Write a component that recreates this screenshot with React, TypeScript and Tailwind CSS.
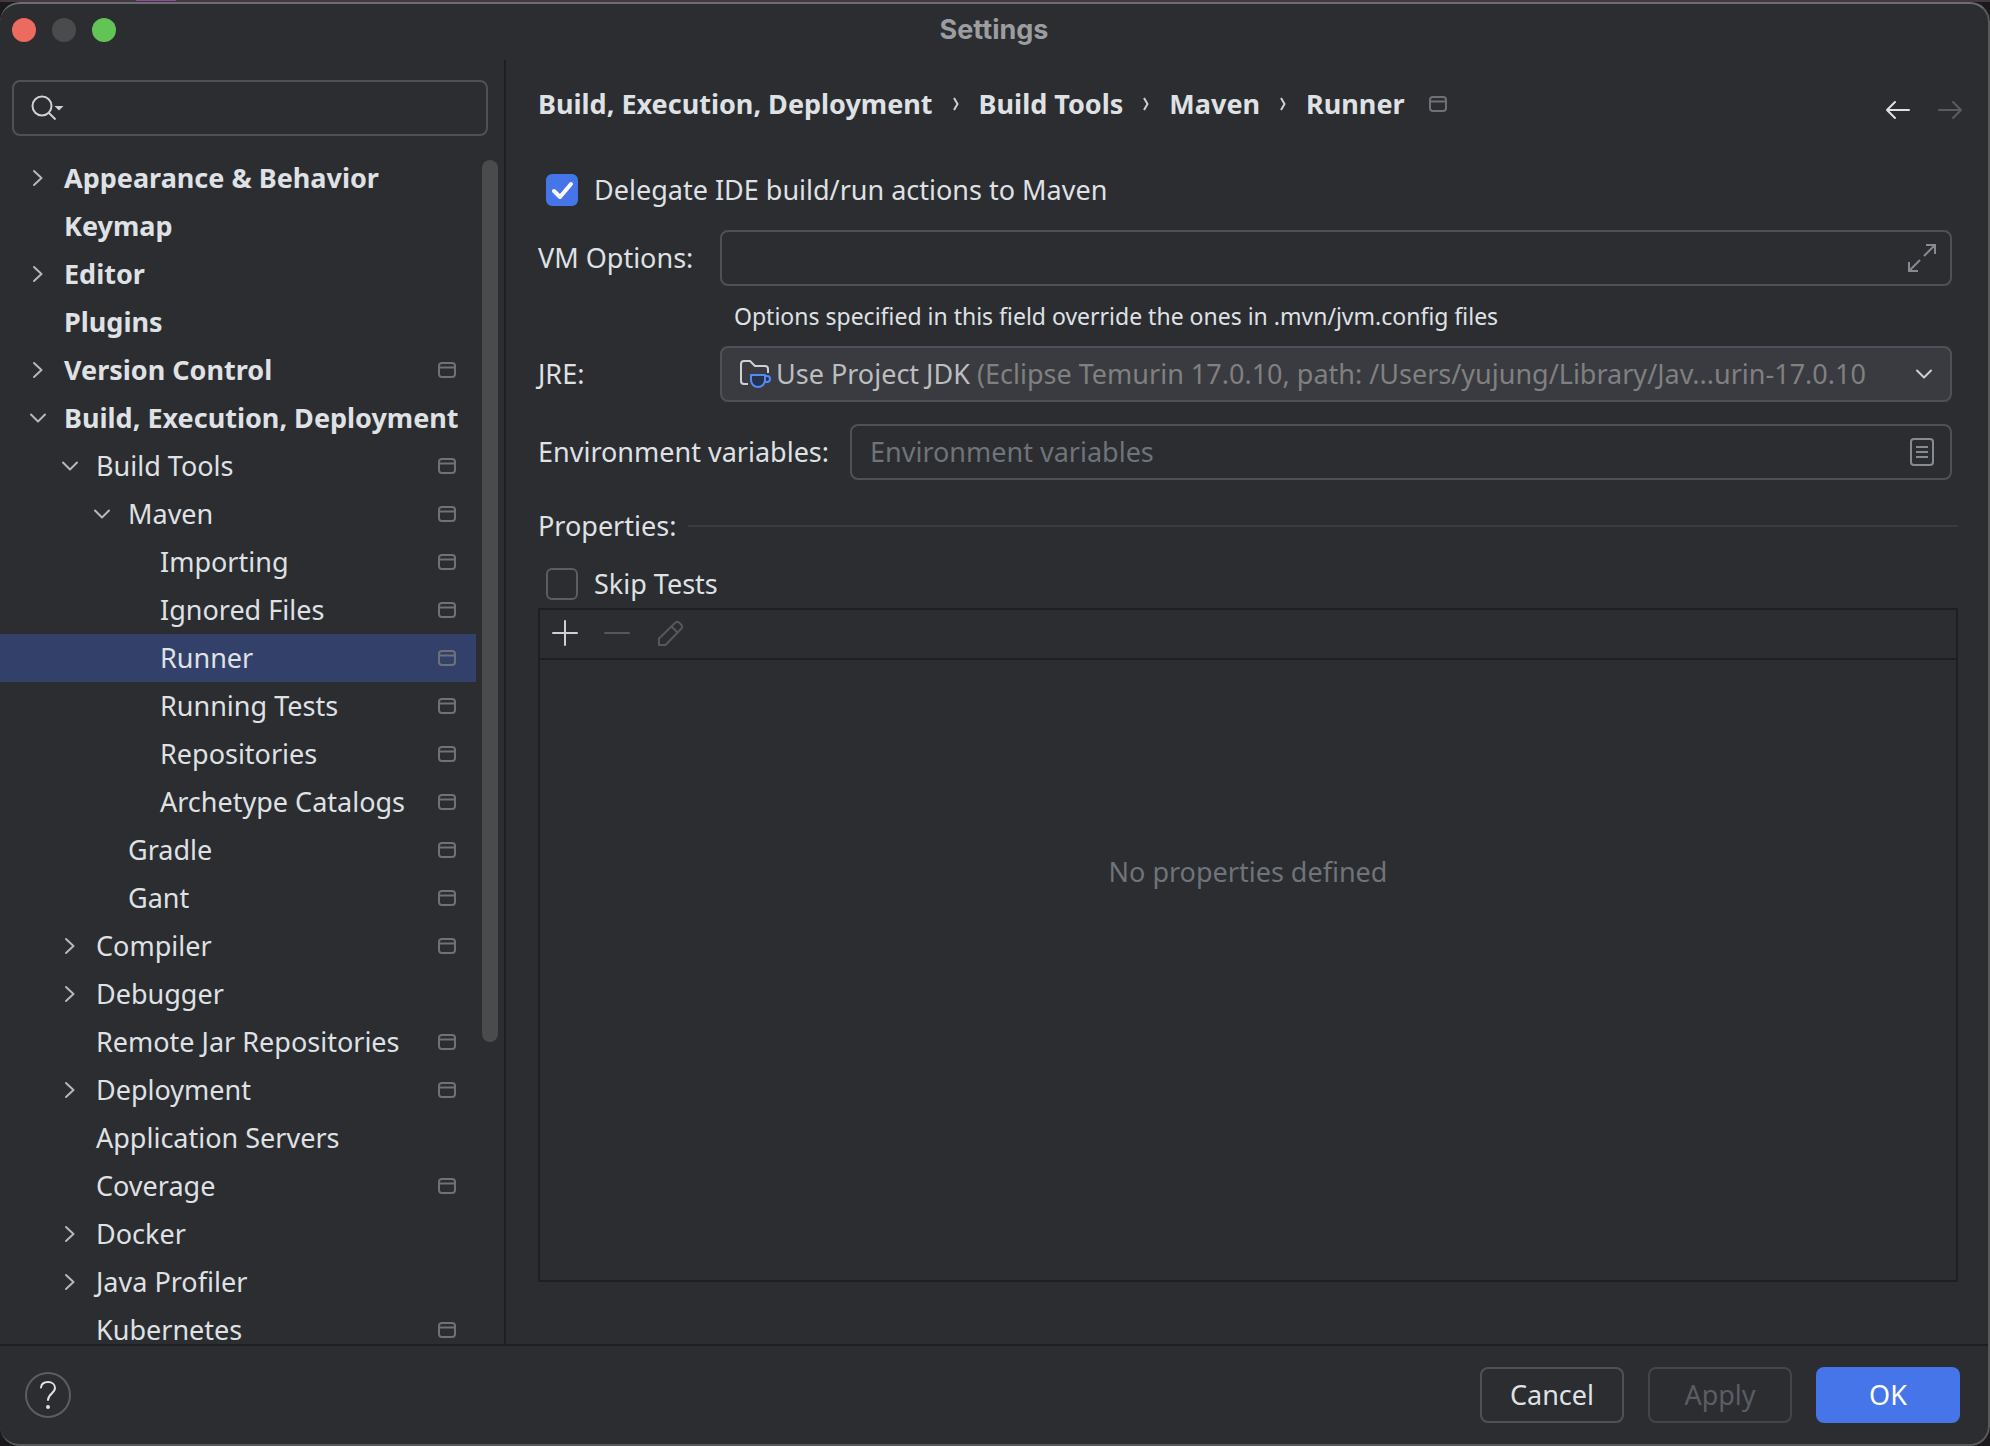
import { useState, type ReactNode } from 'react';

type TreeItem = {
  label: string;
  level: number;
  state?: 'open' | 'closed';
  project?: boolean;
};

const TREE: TreeItem[] = [
  { label: 'Appearance & Behavior', level: 0, state: 'closed' },
  { label: 'Keymap', level: 0 },
  { label: 'Editor', level: 0, state: 'closed' },
  { label: 'Plugins', level: 0 },
  { label: 'Version Control', level: 0, state: 'closed', project: true },
  { label: 'Build, Execution, Deployment', level: 0, state: 'open' },
  { label: 'Build Tools', level: 1, state: 'open', project: true },
  { label: 'Maven', level: 2, state: 'open', project: true },
  { label: 'Importing', level: 3, project: true },
  { label: 'Ignored Files', level: 3, project: true },
  { label: 'Runner', level: 3, project: true },
  { label: 'Running Tests', level: 3, project: true },
  { label: 'Repositories', level: 3, project: true },
  { label: 'Archetype Catalogs', level: 3, project: true },
  { label: 'Gradle', level: 2, project: true },
  { label: 'Gant', level: 2, project: true },
  { label: 'Compiler', level: 1, state: 'closed', project: true },
  { label: 'Debugger', level: 1, state: 'closed' },
  { label: 'Remote Jar Repositories', level: 1, project: true },
  { label: 'Deployment', level: 1, state: 'closed', project: true },
  { label: 'Application Servers', level: 1 },
  { label: 'Coverage', level: 1, project: true },
  { label: 'Docker', level: 1, state: 'closed' },
  { label: 'Java Profiler', level: 1, state: 'closed' },
  { label: 'Kubernetes', level: 1, project: true },
];

const INDENT = ['pl-[22px]', 'pl-[54px]', 'pl-[86px]', 'pl-[118px]'];

const CRUMBS = ['Build, Execution, Deployment', 'Build Tools', 'Maven', 'Runner'];

function ProjectIcon() {
  return (
    <svg width="18" height="16" viewBox="0 0 18 16" fill="none" stroke="#6f7178" strokeWidth="2" className="shrink-0">
      <rect x="1" y="1" width="16" height="14" rx="3" />
      <path d="M1 5.5h16" />
    </svg>
  );
}

function Chevron({ open, color = '#b4b8bf' }: { open: boolean; color?: string }) {
  return (
    <svg width="32" height="32" viewBox="0 0 32 32" fill="none" stroke={color} strokeWidth="2" strokeLinecap="round" strokeLinejoin="round" className="shrink-0">
      {open ? <path d="M9 12.5l7 7 7-7" /> : <path d="M12 9l7.5 7-7.5 7" />}
    </svg>
  );
}

function CheckBox({ id, label, checked, onChange }: { id: string; label: string; checked: boolean; onChange: () => void }) {
  return (
    <div className="flex items-center gap-4 pl-2">
      <div className="relative size-8">
        <input
          id={id}
          type="checkbox"
          checked={checked}
          onChange={onChange}
          className="block size-8 appearance-none rounded-md border-2 border-[#5a5d63] checked:border-[#4674e9] checked:bg-[#4674e9]"
        />
        {checked && (
          <svg viewBox="0 0 32 32" fill="none" stroke="#fff" strokeWidth="4" strokeLinecap="round" strokeLinejoin="round" className="pointer-events-none absolute inset-0 size-8">
            <path d="M8 17l6 6L25 10" />
          </svg>
        )}
      </div>
      <label htmlFor={id}>{label}</label>
    </div>
  );
}

function ToolButton({ label, disabled, children }: { label: string; disabled?: boolean; children: ReactNode }) {
  return (
    <button aria-label={label} disabled={disabled} className="flex size-8 items-center justify-center">
      <svg width="32" height="32" viewBox="0 0 32 32" fill="none" strokeWidth="2" strokeLinecap="round" strokeLinejoin="round" stroke={disabled ? '#55575a' : '#ced0d6'}>
        {children}
      </svg>
    </button>
  );
}

export default function App() {
  const [selected, setSelected] = useState('Runner');
  const [delegate, setDelegate] = useState(true);
  const [skipTests, setSkipTests] = useState(false);
  const [vmOptions, setVmOptions] = useState('');
  const [env, setEnv] = useState('');

  return (
    <div className="flex h-screen flex-col overflow-hidden bg-[#1b191b] font-['Noto_Sans',sans-serif] text-[27px] leading-8 text-[#dfe1e5]">
      {/* Sliver of the editor behind the dialog */}
      <div className="h-0.5 shrink-0 bg-[#43383e] pl-[136px]">
        <div className="h-px w-10 bg-[#8e4b9e]" />
      </div>

      <div className="flex min-h-0 flex-1 flex-col overflow-hidden rounded-[20px] border-y-2 border-r-2 border-[#58595b] border-t-[#6b6e6f] bg-[#2b2d30]">
        {/* Title bar */}
        <div className="flex h-14 shrink-0 items-start px-3 pt-[14px]">
          <div className="flex flex-1 gap-4">
            <button aria-label="Close" className="size-6 rounded-full bg-[#ed6a5e]" />
            <button aria-label="Minimize" className="size-6 rounded-full bg-[#4a4b4d]" />
            <button aria-label="Zoom" className="size-6 rounded-full bg-[#61c454]" />
          </div>
          <h1 className="font-['Inter',sans-serif] leading-6 font-bold text-[#9c9da0]">Settings</h1>
          <div className="flex-1" />
        </div>

        <div className="flex min-h-0 flex-1">
          {/* Sidebar */}
          <aside className="flex w-[506px] shrink-0 flex-col border-r-2 border-[#1e1f22]">
            <div className="pt-5 pr-4 pl-3">
              <div className="flex h-14 items-center rounded-lg border-2 border-[#4e5157] pl-4">
                <svg width="36" height="28" viewBox="0 0 36 28" fill="none" stroke="#ced0d6" strokeWidth="2" className="shrink-0">
                  <circle cx="12" cy="12" r="9.5" />
                  <path d="M19 19l6.500 6.500" />
                  <path d="M24.500 12h9l-4.500 4.500z" fill="#ced0d6" stroke="none" />
                </svg>
                <input aria-label="Search settings" className="min-w-0 flex-1 bg-transparent px-2 outline-none" />
              </div>
            </div>
            <div className="mt-[18px] flex min-h-0 flex-1 overflow-hidden">
              <ul className="min-w-0 flex-1">
                {TREE.map((item) => (
                  <li key={item.label}>
                    <button
                      onClick={() => setSelected(item.label)}
                      className={`flex h-12 w-full items-center pr-5 text-left whitespace-nowrap ${INDENT[item.level]} ${item.level === 0 ? 'font-bold' : ''} ${selected === item.label ? 'bg-[#33416a]' : ''}`}
                    >
                      {item.state ? <Chevron open={item.state === 'open'} /> : <span className="w-8 shrink-0" />}
                      <span className="min-w-0 flex-1 pl-[10px]">{item.label}</span>
                      {item.project && <ProjectIcon />}
                    </button>
                  </li>
                ))}
              </ul>
              <div className="mx-1.5 mt-1.5 h-[882px] w-4 shrink-0 rounded-full bg-[#4a4b4d]" />
            </div>
          </aside>

          {/* Page */}
          <main className="flex min-w-0 flex-1 flex-col pr-[30px] pl-8">
            <div className="flex h-[88px] items-center justify-between">
              <nav aria-label="Breadcrumb" className="flex items-center gap-5 font-bold">
                {CRUMBS.map((crumb, i) => (
                  <div key={crumb} className="flex items-center gap-5">
                    {i > 0 && (
                      <svg width="6" height="14" viewBox="0 0 6 14" fill="none" stroke="#ced0d6" strokeWidth="2">
                        <path d="M1 1l3.500 6L1 13" />
                      </svg>
                    )}
                    <a href="#" className="whitespace-nowrap">{crumb}</a>
                  </div>
                ))}
                <span className="pl-1">
                  <ProjectIcon />
                </span>
              </nav>
              <div className="-mr-2 flex gap-5 pt-3">
                <button aria-label="Back">
                  <svg width="32" height="32" viewBox="0 0 32 32" fill="none" stroke="#dfe1e5" strokeWidth="2" strokeLinecap="round" strokeLinejoin="round">
                    <path d="M27 16H5M13 8l-8 8 8 8" />
                  </svg>
                </button>
                <button aria-label="Forward" disabled>
                  <svg width="32" height="32" viewBox="0 0 32 32" fill="none" stroke="#5a5c5e" strokeWidth="2" strokeLinecap="round" strokeLinejoin="round">
                    <path d="M5 16h22M19 8l8 8-8 8" />
                  </svg>
                </button>
              </div>
            </div>

            <div className="mt-[26px]">
              <CheckBox id="delegate" label="Delegate IDE build/run actions to Maven" checked={delegate} onChange={() => setDelegate(!delegate)} />
            </div>

            <div className="mt-6 flex items-center pr-1.5">
              <label htmlFor="vm" className="w-[182px] shrink-0">VM Options:</label>
              <div className="flex h-14 flex-1 items-center rounded-lg border-2 border-[#4e5157] pr-3 pl-4">
                <input id="vm" value={vmOptions} onChange={(e) => setVmOptions(e.target.value)} className="min-w-0 flex-1 bg-transparent outline-none" />
                <button aria-label="Expand">
                  <svg width="32" height="32" viewBox="0 0 32 32" fill="none" stroke="#868a91" strokeWidth="2">
                    <path d="M20 3h9v9M29 3L18 14M3 20v9h9M3 29l11-11" />
                  </svg>
                </button>
              </div>
            </div>

            <p className="mt-[14px] pl-[196px] text-[23px]">Options specified in this field override the ones in .mvn/jvm.config files</p>

            <div className="mt-[14px] flex items-center pr-1.5">
              <label htmlFor="jre" className="w-[182px] shrink-0">JRE:</label>
              <div className="relative flex h-14 min-w-0 flex-1 items-center rounded-lg border-2 border-[#4e5157] bg-[#393b40] pr-2.5 pl-4">
                <svg width="38" height="32" viewBox="0 0 38 32" fill="none" strokeWidth="2" strokeLinejoin="round" className="shrink-0">
                  <path d="M10 26H6a3 3 0 0 1-3-3V6a3 3 0 0 1 3-3h6l5 5h10a3 3 0 0 1 3 3v4" stroke="#ced0d6" />
                  <path d="M13 17h14v5c0 4-3 7-7 7s-7-3-7-7zM27 18h2a2.500 2.500 0 0 1 0 6h-2" stroke="#548af7" fill="#25324d" />
                </svg>
                <span className="min-w-0 flex-1 overflow-hidden leading-10 whitespace-nowrap text-[#bcbdbf]">
                  Use Project JDK <span className="text-[#808080]">(Eclipse Temurin 17.0.10, path: /Users/yujung/Library/Jav...urin-17.0.10</span>
                </span>
                <span className="pl-2">
                  <Chevron open color="#ced0d6" />
                </span>
                <select id="jre" className="absolute inset-0 opacity-0">
                  <option>Use Project JDK</option>
                </select>
              </div>
            </div>

            <div className="mt-[22px] flex items-center pr-1.5">
              <label htmlFor="env" className="w-[312px] shrink-0">Environment variables:</label>
              <div className="flex h-14 flex-1 items-center rounded-lg border-2 border-[#4e5157] pr-3 pl-[18px]">
                <input
                  id="env"
                  value={env}
                  onChange={(e) => setEnv(e.target.value)}
                  placeholder="Environment variables"
                  className="min-w-0 flex-1 bg-transparent outline-none placeholder:text-[#6f737a]"
                />
                <button aria-label="Edit environment variables">
                  <svg width="32" height="32" viewBox="0 0 32 32" fill="none" stroke="#868a91" strokeWidth="2">
                    <rect x="5" y="3" width="22" height="26" rx="3" />
                    <path d="M10 11h12M10 16h12M10 21h12" />
                  </svg>
                </button>
              </div>
            </div>

            <div className="mt-[30px] flex items-center gap-3">
              <h2>Properties:</h2>
              <div className="h-0.5 flex-1 bg-[#393b40]" />
            </div>

            <div className="mt-[26px]">
              <CheckBox id="skip-tests" label="Skip Tests" checked={skipTests} onChange={() => setSkipTests(!skipTests)} />
            </div>

            <div className="mt-2 mb-[62px] flex flex-1 flex-col border-2 border-[#1e1f22]">
              <div className="flex h-[50px] shrink-0 items-center gap-5 border-b-2 border-[#1e1f22] px-[9px]">
                <ToolButton label="Add">
                  <path d="M4 15h24M16 3v24" />
                </ToolButton>
                <ToolButton label="Remove" disabled>
                  <path d="M4 15h24" />
                </ToolButton>
                <ToolButton label="Edit" disabled>
                  <path d="M6 27v-6.500L22.500 4.500q2-1.500 4 .5l1.500 1.500q2 2 .5 4L12.500 27zM18.500 8.500l6 6" />
                </ToolButton>
              </div>
              <div className="flex flex-1 justify-center pt-[196px] text-[#6f737a]">No properties defined</div>
            </div>
          </main>
        </div>

        {/* Footer */}
        <footer className="flex h-[100px] shrink-0 items-center justify-between border-t-2 border-[#1e1f22] pr-7 pb-px pl-[25px]">
          <button aria-label="Help" className="flex size-[46px] items-center justify-center rounded-full border-2 border-[#5a5d63]">
            <svg width="32" height="32" viewBox="0 0 32 32" fill="none" stroke="#dfe1e5" strokeWidth="2" strokeLinecap="round">
              <path d="M9 8.500C9.500 4.500 12 3 16 3s7 2.500 7 6c0 5-7 6-7 12" />
              <circle cx="16" cy="28" r="1" fill="#dfe1e5" />
            </svg>
          </button>
          <div className="flex gap-6">
            <button className="h-14 w-36 rounded-lg border-2 border-[#4e5157]">Cancel</button>
            <button disabled className="h-14 w-36 rounded-lg border-2 border-[#43454a] text-[#5a5d63]">Apply</button>
            <button className="h-14 w-36 rounded-lg bg-[#4674e9] text-white">OK</button>
          </div>
        </footer>
      </div>
    </div>
  );
}
